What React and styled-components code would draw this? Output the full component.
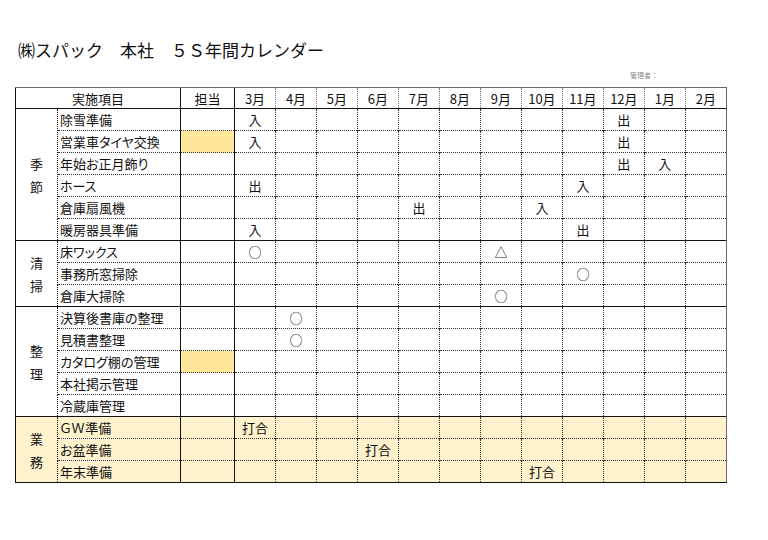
import React from "react";
import styled, { createGlobalStyle } from "styled-components";

const GlobalStyle = createGlobalStyle`
  html, body {
    margin: 0;
    padding: 0;
    background: #ffffff;
  }
  body {
    font-family: "Noto Sans CJK JP", "Noto Sans", sans-serif;
    color: #111111;
  }
`;

const MONTHS = [3, 4, 5, 6, 7, 8, 9, 10, 11, 12, 1, 2];

const groups = [
  {
    name: ["季", "節"],
    tint: false,
    rows: [
      { item: "除雪準備", marks: { 3: "入", 12: "出" } },
      { item: "営業車タイヤ交換", staff: true, marks: { 3: "入", 12: "出" } },
      { item: "年始お正月飾り", marks: { 12: "出", 1: "入" } },
      { item: "ホース", marks: { 3: "出", 11: "入" } },
      { item: "倉庫扇風機", marks: { 7: "出", 10: "入" } },
      { item: "暖房器具準備", marks: { 3: "入", 11: "出" } },
    ],
  },
  {
    name: ["清", "掃"],
    tint: false,
    rows: [
      { item: "床ワックス", marks: { 3: "○", 9: "△" } },
      { item: "事務所窓掃除", marks: { 11: "○" } },
      { item: "倉庫大掃除", marks: { 9: "○" } },
    ],
  },
  {
    name: ["整", "理"],
    tint: false,
    rows: [
      { item: "決算後書庫の整理", marks: { 4: "○" } },
      { item: "見積書整理", marks: { 4: "○" } },
      { item: "カタログ棚の管理", staff: true, marks: {} },
      { item: "本社掲示管理", marks: {} },
      { item: "冷蔵庫管理", marks: {} },
    ],
  },
  {
    name: ["業", "務"],
    tint: true,
    rows: [
      { item: "ＧＷ準備", marks: { 3: "打合" } },
      { item: "お盆準備", marks: { 6: "打合" } },
      { item: "年末準備", marks: { 10: "打合" } },
    ],
  },
];

const Page = styled.div`
  padding: 38px 0 0 15px;
  width: 712px;
`;

const Title = styled.h1`
  margin: 0 0 0 3px;
  font-size: 17px;
  font-weight: 400;
  line-height: 24px;
  color: #111;
  white-space: pre;
`;

const ManagerLine = styled.div`
  height: 25px;
  display: flex;
  align-items: center;
  padding-left: 615px;
  font-size: 7px;
  color: #8a8a8a;
`;

const Sheet = styled.table`
  width: 712px;
  border-collapse: collapse;
  table-layout: fixed;
  font-size: 13px;
  font-feature-settings: "palt";
`;

const HeadCell = styled.th`
  height: 20px;
  padding: 0;
  font-weight: 400;
  text-align: center;
  border-top: 1px solid #6a6a6a;
  border-bottom: 1px solid #111;
  border-left: 1px ${(p) => (p.$solid ? "solid #111" : "dotted #777")};
  &:first-child {
    border-left: 1px solid #111;
  }
  &:last-child {
    border-right: 1px solid #6a6a6a;
  }
`;

const Row = styled.tr`
  height: 22px;
  background: ${(p) => (p.$tint ? "#fff2cc" : "#ffffff")};
  td {
    border-top: 1px ${(p) => (p.$first ? "solid #111" : "dotted #333")};
  }
  &:last-child td {
    border-bottom: 1px solid #111;
  }
`;

const CategoryCell = styled.td`
  padding: 0;
  text-align: center;
  vertical-align: middle;
  line-height: 23px;
  border-left: 1px solid #111;
  border-right: 1px dotted #111;
  border-bottom: 1px solid #111;
`;

const ItemCell = styled.td`
  padding: 0 0 0 2px;
  white-space: nowrap;
  overflow: hidden;
  border-right: 1px solid #111;
`;

const StaffCell = styled.td`
  padding: 0;
  background: ${(p) => (p.$filled ? "#ffe699" : "transparent")};
  border-right: 1px solid #111;
`;

const MonthCell = styled.td`
  padding: 0;
  text-align: center;
  border-right: 1px dotted #333;
  &:last-child {
    border-right: 1px solid #6a6a6a;
  }
`;

function GroupRows({ group }) {
  return group.rows.map((row, i) => (
    <Row key={row.item} $first={i === 0} $tint={group.tint}>
      {i === 0 && (
        <CategoryCell rowSpan={group.rows.length}>
          {group.name.map((c) => (
            <div key={c}>{c}</div>
          ))}
        </CategoryCell>
      )}
      <ItemCell>{row.item}</ItemCell>
      <StaffCell $filled={row.staff} />
      {MONTHS.map((m) => (
        <MonthCell key={m}>{row.marks[m] || ""}</MonthCell>
      ))}
    </Row>
  ));
}

export default function App() {
  return (
    <>
      <GlobalStyle />
      <Page>
        <Title>㈱スパック　本社　５Ｓ年間カレンダー</Title>
        <ManagerLine>管理者：</ManagerLine>
        <Sheet>
          <colgroup>
            <col style={{ width: 42 }} />
            <col style={{ width: 123 }} />
            <col style={{ width: 54 }} />
            {MONTHS.map((m) => (
              <col key={m} />
            ))}
          </colgroup>
          <thead>
            <tr>
              <HeadCell colSpan={2}>実施項目</HeadCell>
              <HeadCell $solid>担当</HeadCell>
              {MONTHS.map((m, i) => (
                <HeadCell key={m} $solid={i === 0}>
                  {m}月
                </HeadCell>
              ))}
            </tr>
          </thead>
          <tbody>
            {groups.map((g) => (
              <GroupRows key={g.name.join("")} group={g} />
            ))}
          </tbody>
        </Sheet>
      </Page>
    </>
  );
}
